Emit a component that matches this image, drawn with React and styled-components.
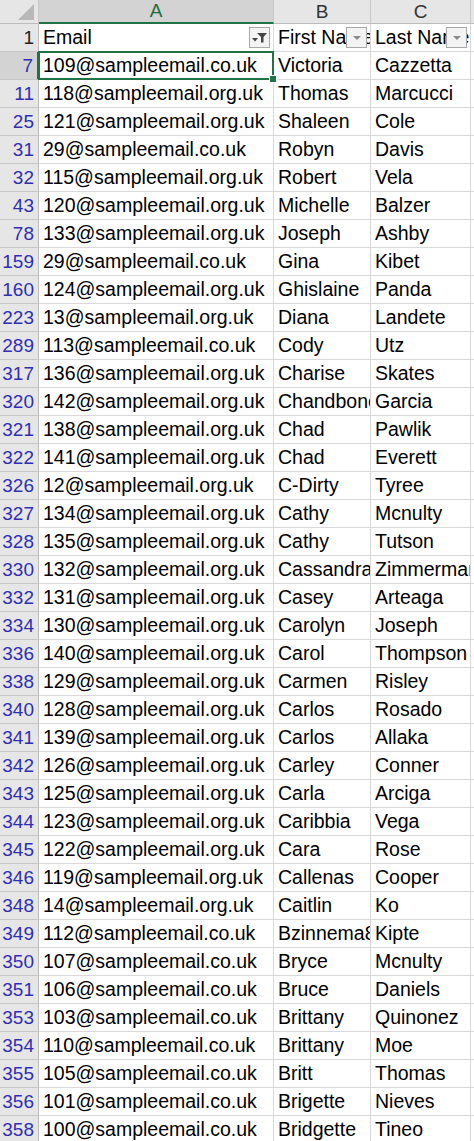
import React from 'react';
import styled, { createGlobalStyle } from 'styled-components';

const rows = [
	[7, '109@sampleemail.co.uk', 'Victoria', 'Cazzetta'],
	[11, '118@sampleemail.org.uk', 'Thomas', 'Marcucci'],
	[25, '121@sampleemail.org.uk', 'Shaleen', 'Cole'],
	[31, '29@sampleemail.co.uk', 'Robyn', 'Davis'],
	[32, '115@sampleemail.org.uk', 'Robert', 'Vela'],
	[43, '120@sampleemail.org.uk', 'Michelle', 'Balzer'],
	[78, '133@sampleemail.org.uk', 'Joseph', 'Ashby'],
	[159, '29@sampleemail.co.uk', 'Gina', 'Kibet'],
	[160, '124@sampleemail.org.uk', 'Ghislaine', 'Panda'],
	[223, '13@sampleemail.org.uk', 'Diana', 'Landete'],
	[289, '113@sampleemail.co.uk', 'Cody', 'Utz'],
	[317, '136@sampleemail.org.uk', 'Charise', 'Skates'],
	[320, '142@sampleemail.org.uk', 'Chandbone', 'Garcia'],
	[321, '138@sampleemail.org.uk', 'Chad', 'Pawlik'],
	[322, '141@sampleemail.org.uk', 'Chad', 'Everett'],
	[326, '12@sampleemail.org.uk', 'C-Dirty', 'Tyree'],
	[327, '134@sampleemail.org.uk', 'Cathy', 'Mcnulty'],
	[328, '135@sampleemail.org.uk', 'Cathy', 'Tutson'],
	[330, '132@sampleemail.org.uk', 'Cassandra', 'Zimmerman'],
	[332, '131@sampleemail.org.uk', 'Casey', 'Arteaga'],
	[334, '130@sampleemail.org.uk', 'Carolyn', 'Joseph'],
	[336, '140@sampleemail.org.uk', 'Carol', 'Thompson'],
	[338, '129@sampleemail.org.uk', 'Carmen', 'Risley'],
	[340, '128@sampleemail.org.uk', 'Carlos', 'Rosado'],
	[341, '139@sampleemail.org.uk', 'Carlos', 'Allaka'],
	[342, '126@sampleemail.org.uk', 'Carley', 'Conner'],
	[343, '125@sampleemail.org.uk', 'Carla', 'Arciga'],
	[344, '123@sampleemail.org.uk', 'Caribbia', 'Vega'],
	[345, '122@sampleemail.org.uk', 'Cara', 'Rose'],
	[346, '119@sampleemail.org.uk', 'Callenas', 'Cooper'],
	[348, '14@sampleemail.org.uk', 'Caitlin', 'Ko'],
	[349, '112@sampleemail.co.uk', 'Bzinnema8', 'Kipte'],
	[350, '107@sampleemail.co.uk', 'Bryce', 'Mcnulty'],
	[351, '106@sampleemail.co.uk', 'Bruce', 'Daniels'],
	[353, '103@sampleemail.co.uk', 'Brittany', 'Quinonez'],
	[354, '110@sampleemail.co.uk', 'Brittany', 'Moe'],
	[355, '105@sampleemail.co.uk', 'Britt', 'Thomas'],
	[356, '101@sampleemail.co.uk', 'Brigette', 'Nieves'],
	[358, '100@sampleemail.co.uk', 'Bridgette', 'Tineo'],
];

const GlobalStyle = createGlobalStyle`
	html, body {
		margin: 0;
		padding: 0;
		background: #fff;
		overflow: hidden;
	}
	body {
		font-family: 'Liberation Sans', Arial, sans-serif;
	}
`;

const FilterArrow = () => (
	<svg width="10" height="6" viewBox="0 0 10 6">
		<polygon points="1,1 9,1 5,5" fill="#8a8a8a" />
	</svg>
);

const FilterActive = () => (
	<svg width="16" height="12" viewBox="0 0 16 12">
		<polygon points="0,6 6,6 3,9.5" fill="#444" />
		<polygon points="5,1 15,1 11.5,5 11.5,10.5 9,10.5 9,5" fill="#444" />
	</svg>
);

const App = () => {
	return (
		<>
			<GlobalStyle />
			<Sheet>
				<Corner>
					<CornerTriangle />
				</Corner>
				<ColHead $selected>A</ColHead>
				<ColHead>B</ColHead>
				<ColHead>C</ColHead>
				<ColHead $last />

				<RowHead $plain>1</RowHead>
				<Cell>
					Email
					<FilterButton>
						<FilterActive />
					</FilterButton>
				</Cell>
				<Cell>
					First Name
					<FilterButton>
						<FilterArrow />
					</FilterButton>
				</Cell>
				<Cell>
					Last Name
					<FilterButton>
						<FilterArrow />
					</FilterButton>
				</Cell>
				<Cell $last />

				{rows.map(([n, email, first, last], i) => (
					<React.Fragment key={n}>
						<RowHead $selected={i === 0}>{n}</RowHead>
						<Cell $active={i === 0}>{email}</Cell>
						<Cell>{first}</Cell>
						<Cell>{last}</Cell>
						<Cell $last />
					</React.Fragment>
				))}
			</Sheet>
		</>
	);
};

export default App;

const Sheet = styled.div`
	display: grid;
	grid-template-columns: 39px 235px 97px 100px 1fr;
	grid-auto-rows: 28px;
	grid-template-rows: 24px;
	width: 474px;
	height: 1141px;
	overflow: hidden;
	font-size: 19.5px;
	color: #000;
`;

const Corner = styled.div`
	position: relative;
	background: #e6e6e6;
	border-right: 1px solid #c8c8c8;
	border-bottom: 1px solid #bcbcbc;
`;

const CornerTriangle = styled.div`
	position: absolute;
	right: 4px;
	bottom: 3px;
	width: 0;
	height: 0;
	border-left: 16px solid transparent;
	border-bottom: 16px solid #b8b8b8;
`;

const ColHead = styled.div`
	display: flex;
	align-items: center;
	justify-content: center;
	background: ${(p) => (p.$selected ? '#d3d3d3' : '#e6e6e6')};
	color: ${(p) => (p.$selected ? '#1e6b41' : '#333')};
	font-size: 19px;
	border-right: ${(p) => (p.$last ? 'none' : '1px solid #c8c8c8')};
	border-bottom: ${(p) => (p.$selected ? '2px solid #217346' : '1px solid #bcbcbc')};
`;

const RowHead = styled.div`
	display: flex;
	align-items: flex-end;
	justify-content: flex-end;
	padding: 0 4px 2px 0;
	background: ${(p) => (p.$selected ? '#d3d3d3' : '#e6e6e6')};
	color: ${(p) => (p.$plain ? '#222' : '#2f2fb3')};
	font-size: 19px;
	border-right: ${(p) => (p.$selected ? '2px solid #217346' : '1px solid #bcbcbc')};
	border-bottom: 1px solid #c8c8c8;
`;

const Cell = styled.div`
	position: relative;
	display: flex;
	align-items: flex-end;
	padding: 0 0 2px 4px;
	white-space: nowrap;
	overflow: hidden;
	background: #fff;
	border-right: 1px solid #d9d9d9;
	border-bottom: 1px solid #d9d9d9;
	${(p) =>
		p.$active &&
		`
		overflow: visible;
		z-index: 2;
		&::after {
			content: '';
			position: absolute;
			left: -1px;
			top: -1px;
			right: -1px;
			bottom: -1px;
			border: 2px solid #217346;
			pointer-events: none;
		}
		&::before {
			content: '';
			position: absolute;
			right: -4px;
			bottom: -4px;
			width: 6px;
			height: 6px;
			background: #217346;
			border: 1px solid #fff;
			z-index: 3;
		}
	`}
`;

const FilterButton = styled.div`
	position: absolute;
	right: 3px;
	top: 3px;
	width: 21px;
	height: 21px;
	box-sizing: border-box;
	display: flex;
	align-items: center;
	justify-content: center;
	background: #f3f3f3;
	border: 1px solid #a8a8a8;
`;
